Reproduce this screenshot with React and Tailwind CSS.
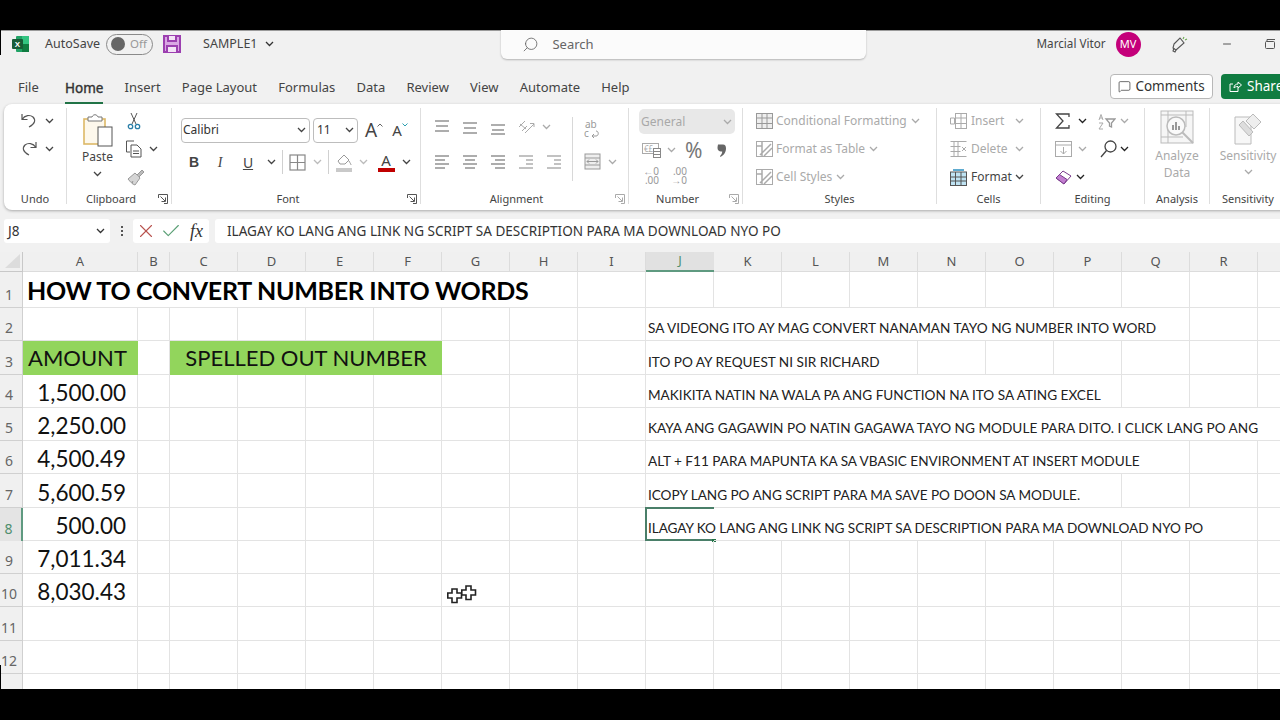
import { Search, MessageSquare, X, Check, Minus } from 'lucide-react';

/* ─── small helpers ─── */
const Chev = ({ c = '#444', className = '' }) => (
  <svg width="9" height="6" viewBox="0 0 9 6" fill="none" stroke={c} strokeWidth="1.300" className={`shrink-0 ${className}`}>
    <path d="M1 1l3.500 3.500L8 1" />
  </svg>
);
const Slot = ({ w, children, className = '' }) => (
  <div className={`flex items-center justify-center shrink-0 ${className}`} style={{ width: w }}>{children}</div>
);
const Launcher = ({ c = '#555' }) => (
  <svg width="10" height="10" viewBox="0 0 10 10" fill="none" stroke={c} className="absolute right-[3px] top-[4px]">
    <path d="M0.500 4V0.500h9v9H6M2.500 2.500l4.500 4.500M7.500 3.500v4h-4" />
  </svg>
);
const Lines = ({ rows, c = '#777' }) => (
  <svg width="18" height="16" viewBox="0 0 18 16" stroke={c} strokeWidth="1.200" className="shrink-0">
    {rows.map(([a, b, y]) => <path key={y} d={`M${a} ${y}H${b}`} />)}
  </svg>
);

/* ─── ribbon icons ─── */
const ExcelLogo = () => (
  <svg width="18" height="18" viewBox="0 0 18 18">
    <rect x="4" y="1" width="13" height="16" rx="1" fill="#21a366" />
    <rect x="10" y="1" width="7" height="8" fill="#33c481" />
    <rect x="10" y="9" width="7" height="8" fill="#107c41" />
    <rect x="0" y="4" width="11" height="10" rx="1" fill="#185c37" />
    <text x="5.500" y="12" textAnchor="middle" fontSize="8" fontWeight="700" fill="#fff" fontFamily="Liberation Sans">X</text>
  </svg>
);
const SaveIcon = () => (
  <svg width="18" height="18" viewBox="0 0 18 18" fill="none" stroke="#9c3fb0" strokeWidth="2">
    <rect x="1" y="1" width="16" height="16" fill="#d9a6e3" />
    <path d="M5 1v5h8V1M4 17v-6h10v6" fill="#f3e3f6" />
  </svg>
);
const Undo = ({ flip }) => (
  <svg width="18" height="18" viewBox="0 0 18 18" fill="none" stroke="#555" strokeWidth="1.200" className={flip ? '-scale-x-100' : ''}>
    <path d="M2 2v5.500h5.500M2 7.500C5 3 10 2.500 13 5c3 3 2 7-4 10" />
  </svg>
);
const PasteIcon = () => (
  <svg width="30" height="33" viewBox="0 0 30 33" fill="none">
    <rect x="1" y="5" width="21" height="25" fill="#fdf8ec" stroke="#dcb867" strokeWidth="1.600" />
    <path d="M5 7V3h4c1-3 5-3 6 0h4v4z" fill="#fff" stroke="#777" />
    <rect x="15" y="13" width="14" height="19" fill="#fff" stroke="#555" />
  </svg>
);
const ScissorsIcon = () => (
  <svg width="14" height="18" viewBox="0 0 14 18" fill="none" stroke="#555">
    <path d="M4 1l5 11M10 1L5 12" />
    <circle cx="3.500" cy="14.500" r="2.200" stroke="#2a7fa8" strokeWidth="1.300" />
    <circle cx="10.500" cy="14.500" r="2.200" stroke="#2a7fa8" strokeWidth="1.300" />
  </svg>
);
const CopyIcon = () => (
  <svg width="18" height="18" viewBox="0 0 18 18" fill="none" stroke="#555">
    <path d="M9 1H1.500v11H5" />
    <path d="M6 5h6l4 4v8H6z" fill="#fff" />
    <path d="M8 11h6M8 13.500h6" />
  </svg>
);
const BrushIcon = () => (
  <svg width="18" height="17" viewBox="0 0 18 17" fill="none" stroke="#999">
    <path d="M1 10l7-6 5 5-5 7-3-1.500 1-2-2 1z" fill="#d5d5d5" />
    <path d="M10 6l5-5 2 2-5 5" fill="#bbb" />
  </svg>
);
const BordersIcon = () => (
  <svg width="17" height="17" viewBox="0 0 17 17" fill="none" stroke="#888" strokeWidth="1.200" className="shrink-0">
    <rect x="1" y="1" width="15" height="15" />
    <path d="M8.500 1v15M1 8.500h15" />
  </svg>
);
const FillIcon = () => (
  <svg width="18" height="19" viewBox="0 0 18 19" fill="none" stroke="#999" className="shrink-0">
    <path d="M3 8l6-6 5 5-4 4H5z" />
    <path d="M14 8c1 2 2 3 2 4" />
    <rect x="1" y="15" width="16" height="4" fill="#c9c9c9" stroke="none" />
  </svg>
);
const WrapIcon = () => (
  <svg width="16" height="20" viewBox="0 0 16 20" fill="none" stroke="#999" strokeWidth="1">
    <text x="1" y="8" fontSize="10" fill="#999" stroke="none" fontFamily="Noto Sans">ab</text>
    <text x="0" y="17" fontSize="10" fill="#999" stroke="none" fontFamily="Noto Sans">c</text>
    <path d="M8 16h4c3 0 3-5 0-5M10 14l-2 2 2 2" />
  </svg>
);
const MergeIcon = () => (
  <svg width="17" height="17" viewBox="0 0 17 17" fill="none" stroke="#999" className="shrink-0">
    <rect x="1" y="1" width="15" height="15" fill="#eee" />
    <path d="M1 5h15M1 12h15M3 8.500h11M5 6.500l-2 2 2 2M12 6.500l2 2-2 2" />
  </svg>
);
const OrientIcon = () => (
  <svg width="18" height="16" viewBox="0 0 18 16" fill="none" stroke="#aaa" className="shrink-0">
    <path d="M2 8l6-6M5 12l5-5M3 5l6 5M8 14l9-9M13 4.500h4V8" />
  </svg>
);
const GridIcon = ({ c = '#aaa', fill = 'none' }) => (
  <svg width="17" height="16" viewBox="0 0 17 16" fill={fill} stroke={c} className="shrink-0">
    <rect x="0.500" y="0.500" width="16" height="15" />
    <path d="M0.500 5h16M0.500 10.500h16M6 0.500v15M11 0.500v15" fill="none" />
  </svg>
);
const HatchIcon = () => (
  <svg width="17" height="16" viewBox="0 0 17 16" fill="none" stroke="#aaa" className="shrink-0">
    <rect x="0.500" y="0.500" width="16" height="15" />
    <path d="M0.500 5h6M6 0.500v15M15 3L4 14M16 7l-8 8" strokeWidth="1.500" />
  </svg>
);
const InsertCellsIcon = () => (
  <svg width="17" height="16" viewBox="0 0 17 16" fill="none" stroke="#aaa" className="shrink-0">
    <rect x="5.500" y="0.500" width="11" height="15" />
    <path d="M5.500 5h11M5.500 10.500h11M11 0.500v15M0.500 5h4v6h-4z" />
  </svg>
);
const DeleteCellsIcon = () => (
  <svg width="17" height="16" viewBox="0 0 17 16" fill="none" stroke="#aaa" className="shrink-0">
    <path d="M0.500 0.500h16M0.500 15.500h16M0.500 5.500h10M0.500 10.500h10M4 0.500v15M8 0.500v15M12 6l4 4M16 6l-4 4" />
  </svg>
);
const CurrencyIcon = () => (
  <svg width="20" height="16" viewBox="0 0 20 16" fill="none" stroke="#aaa" className="shrink-0">
    <rect x="0.500" y="1.500" width="16" height="10" />
    <text x="2" y="9.500" fontSize="8" fill="#aaa" stroke="none" fontFamily="Noto Sans">€£</text>
    <rect x="11.500" y="6.500" width="7" height="9" fill="#fff" stroke="#888" />
    <path d="M11.500 9.500h7M11.500 12.500h7" stroke="#888" />
  </svg>
);
const CommaIcon = () => (
  <svg width="9" height="14" viewBox="0 0 9 14" className="shrink-0">
    <path d="M1 1.500h5c2 0 3 1.500 3 4 0 4-2.500 7-5.500 8.500L3 13c1.500-1.500 2.200-3 2.200-4.500H4C2 8.500 0.500 7 0.500 5 0.500 3 1 2 1 1.500z" fill="#666" />
  </svg>
);
const FormatIcon = () => (
  <svg width="17" height="17" viewBox="0 0 17 17" fill="none" stroke="#555" className="shrink-0">
    <rect x="0.500" y="3" width="16" height="13.500" fill="#bfe3f3" />
    <path d="M0.500 8h16M0.500 12h16M5.500 3v13.500M11 3v13.500" />
    <path d="M3 1h11" stroke="#2a8fc0" strokeWidth="1.500" />
  </svg>
);
const SigmaIcon = () => (
  <svg width="15" height="16" viewBox="0 0 15 16" fill="none" stroke="#444" strokeWidth="1.300" className="shrink-0">
    <path d="M14 4V1H1.500L8 8l-6.500 7H14v-3" />
  </svg>
);
const FindIcon = () => (
  <svg width="17" height="18" viewBox="0 0 17 18" fill="none" stroke="#444" strokeWidth="1.300" className="shrink-0">
    <circle cx="10.500" cy="6.500" r="5.500" />
    <path d="M6.500 10.500L1 17" />
  </svg>
);
const Eraser = () => (
  <svg width="17" height="15" viewBox="0 0 17 15" fill="none" stroke="#7a3a8c" className="shrink-0">
    <path d="M1 8l7-7 8 5-7 8z" fill="#fff" />
    <path d="M1 8l3.500-3.500 7.500 5L9 14z" fill="#c27ed0" />
  </svg>
);
const SortIcon = () => (
  <svg width="18" height="17" viewBox="0 0 18 17" fill="none" stroke="#aaa" className="shrink-0">
    <path d="M1 7l2-5.500L5 7M1.800 5h2.500M1 10h4l-4 6h4" />
    <path d="M8 6h9l-3.500 4v4l-2-1v-3z" strokeWidth="1.300" stroke="#999" />
  </svg>
);
const FillDown = () => (
  <svg width="17" height="16" viewBox="0 0 17 16" fill="none" stroke="#aaa" className="shrink-0">
    <rect x="0.500" y="0.500" width="16" height="15" />
    <path d="M0.500 4h16M8.500 6v7M5.500 10l3 3 3-3" />
  </svg>
);
const AnalyzeIcon = () => (
  <svg width="35" height="35" viewBox="0 0 35 35" fill="none" stroke="#bbb">
    <rect x="1" y="1" width="32" height="32" fill="#f6f6f6" />
    <path d="M1 5h32M1 27h22M8 1v32M26 1v16" />
    <circle cx="16" cy="16" r="9" fill="#fafafa" strokeWidth="1.500" />
    <path d="M22.500 22.500L33 33" strokeWidth="2" />
    <path d="M13 20v-5M16 20v-8M19 20v-4" strokeWidth="2" stroke="#999" />
  </svg>
);
const SensitivityIcon = () => (
  <svg width="30" height="33" viewBox="0 0 30 33" fill="none" stroke="#bbb">
    <path d="M2 5h16v27H2z" fill="#f7f7f7" />
    <path d="M6 13l10 11 4-4L10 9z" fill="#ddd" />
    <path d="M13 9l7-7 8 8-7 7z" fill="#eee" />
  </svg>
);
const FeedbackIcon = () => (
  <svg width="18" height="18" viewBox="0 0 18 18" fill="none" stroke="#555" strokeWidth="1.100" className="shrink-0">
    <path d="M4 9L10 3l4 5-8 7-3-2z" />
    <path d="M6 15l-1 2-2-1 1-3" />
    <path d="M14 2l-1 2M17 4l-2 1" stroke="#6aa84f" />
  </svg>
);
const DragCursor = () => (
  <svg width="30" height="19" viewBox="0 0 30 19" fill="#fff" stroke="#222" strokeWidth="1.600">
    <path d="M5 4h5v4h4.500v5H10v4.500H5V13H0.800V8H5z" />
    <path d="M19 1h5v4h4.500v5H24v4.500h-5V10h-4.200V5H19z" />
  </svg>
);

/* ─── ribbon group ─── */
const Group = ({ w, label, launcher, sep = true, children }) => (
  <div className={`relative h-[96px] shrink-0 ${sep ? 'border-r border-[#dedede]' : ''}`} style={{ width: w }}>
    <div className="h-[83px] -mt-[1px] flow-root">{children}</div>
    <div className={`relative h-[18px] flex items-center justify-center text-[11px] text-[#444] ${launcher ? 'pr-[16px]' : ''}`}>
      {label}
      {launcher && <Launcher c={launcher} />}
    </div>
  </div>
);
const Row = ({ children, className = '' }) => (
  <div className={`flex items-center h-[28px] ${className}`}>{children}</div>
);

const UndoGroup = () => (
  <Group w={63} label="Undo">
    <div className="pl-[16px]">
      <Row><Undo /><Chev className="ml-[7px]" /></Row>
      <Row><Undo flip /><Chev className="ml-[7px]" /></Row>
    </div>
  </Group>
);

const ClipboardGroup = () => (
  <Group w={105} label="Clipboard" launcher="#555">
    <div className="flex">
      <div className="w-[60px] flex flex-col items-center pt-[7px] pl-[1px]">
        <PasteIcon />
        <span className="text-[12px] text-[#444] mt-[1px] leading-[18px]">Paste</span>
        <Chev className="mt-[5px]" />
      </div>
      <div>
        <Row><Slot w={14}><ScissorsIcon /></Slot></Row>
        <Row className="-ml-[2px]"><CopyIcon /><Chev className="ml-[6px]" /></Row>
        <Row><BrushIcon /></Row>
      </div>
    </div>
  </Group>
);

const FontGroup = () => (
  <Group w={249} label="Font" launcher="#555">
    <div className="flex items-center mt-[11px] pl-[9px] h-[24px]">
      <div className="w-[129px] h-[25px] bg-white border border-[#bdbdbd] rounded-[4px] flex items-center justify-between pl-[1px] pr-[3px] text-[12px] text-[#333]">
        Calibri <Chev />
      </div>
      <div className="ml-[3px] w-[45px] h-[25px] bg-white border border-[#bdbdbd] rounded-[4px] flex items-center justify-between pl-[3px] pr-[3px] text-[12px] text-[#333]">
        11 <Chev />
      </div>
      <span className="ml-[7px] text-[19px] leading-none text-[#444]">A</span>
      <svg width="6" height="4" viewBox="0 0 6 4" fill="none" stroke="#666" className="-mt-[10px]"><path d="M0.500 3.500L3 1l2.500 2.500" /></svg>
      <span className="ml-[9px] text-[15px] leading-none text-[#444]">A</span>
      <svg width="6" height="4" viewBox="0 0 6 4" fill="none" stroke="#2a9fb0" className="-mt-[10px]"><path d="M0.500 0.500L3 3l2.500-2.500" /></svg>
    </div>
    <div className="flex items-center mt-[8px] h-[24px] pl-[16px] text-[#444]">
      <Slot w={12}><span className="text-[14px] font-bold font-['Liberation_Sans']">B</span></Slot>
      <Slot w={14} className="ml-[13px]"><span className="text-[14px] italic font-['Liberation_Serif']">I</span></Slot>
      <Slot w={14} className="ml-[14px]"><span className="text-[14px] underline">U</span></Slot>
      <Chev className="ml-[12px]" />
      <div className="ml-[6px] h-[24px] border-l border-[#d0d0d0]" />
      <div className="ml-[6px]"><BordersIcon /></div>
      <Chev c="#bbb" className="ml-[7px]" />
      <div className="ml-[6px] h-[24px] border-l border-[#d0d0d0]" />
      <div className="ml-[6px]"><FillIcon /></div>
      <Chev c="#bbb" className="ml-[6px]" />
      <div className="ml-[9px] flex flex-col items-center w-[18px]">
        <span className="text-[15px] leading-[14px] text-[#444]">A</span>
        <div className="w-[17px] h-[4px] mt-[1px] bg-[#c00000]" />
      </div>
      <Chev className="ml-[7px]" />
    </div>
  </Group>
);

const AlignGroup = () => (
  <Group w={208} label="Alignment" launcher="#aaa">
    <div className="flex items-start pl-[12px]">
      <div>
        <div className="flex items-center gap-[10px] h-[24px] mt-[8px]">
          <Lines rows={[[2, 16, 2], [3, 15, 7], [2, 16, 12]]} />
          <Lines rows={[[2, 16, 4], [3, 15, 9], [2, 16, 14]]} />
          <Lines rows={[[2, 16, 6], [3, 15, 11], [2, 16, 15]]} />
          <OrientIcon />
          <Chev c="#aaa" className="-ml-[3px]" />
        </div>
        <div className="flex items-center gap-[10px] h-[24px] mt-[11px]">
          <Lines rows={[[2, 16, 2], [2, 12, 6], [2, 16, 10], [2, 12, 14]]} />
          <Lines rows={[[2, 16, 2], [4, 14, 6], [2, 16, 10], [4, 14, 14]]} />
          <Lines rows={[[2, 16, 2], [6, 16, 6], [2, 16, 10], [6, 16, 14]]} />
          <Lines rows={[[2, 16, 2], [9, 16, 6], [9, 16, 10], [2, 16, 14]]} c="#999" />
          <Lines rows={[[2, 16, 2], [9, 16, 6], [9, 16, 10], [2, 16, 14]]} c="#999" />
        </div>
      </div>
      <div className="ml-[9px] mt-[10px] h-[64px] border-l border-[#d8d8d8]" />
      <div className="ml-[11px] mt-[13px]">
        <WrapIcon />
        <div className="flex items-center mt-[13px]"><MergeIcon /><Chev c="#aaa" className="ml-[7px]" /></div>
      </div>
    </div>
  </Group>
);

const NumberGroup = () => (
  <Group w={114} label="Number" launcher="#aaa">
    <div className="pl-[10px]">
      <div className="w-[96px] h-[25px] mt-[2px] bg-[#e8e8e8] rounded-[5px] flex items-center justify-between pl-[2px] pr-[3px] text-[12px] text-[#a8a8a8]">
        General <Chev c="#aaa" />
      </div>
      <div className="flex items-center h-[26px] mt-[3px] pl-[3px]">
        <CurrencyIcon />
        <Chev c="#aaa" className="ml-[5px]" />
        <span className="ml-[9px] text-[21px] leading-none text-[#777]">%</span>
        <div className="ml-[15px]"><CommaIcon /></div>
      </div>
      <div className="flex items-center h-[26px] text-[10px] leading-[9px] text-[#999]">
        <span className="w-[20px] text-right">←0<br />.00</span>
        <span className="ml-[8px] w-[20px] text-right">.00<br />→0</span>
      </div>
    </div>
  </Group>
);

const StyleLine = ({ icon, label }) => (
  <Row className="pl-[5px]">
    {icon}
    <span className="ml-[3px] text-[12px] text-[#aaa] whitespace-nowrap">{label}</span>
    <Chev c="#aaa" className="ml-[4px]" />
  </Row>
);

const StylesGroup = () => (
  <Group w={194} label="Styles">
    <div className="pl-[8px]">
      <StyleLine icon={<GridIcon c="#999" fill="#eee" />} label="Conditional Formatting" />
      <StyleLine icon={<HatchIcon />} label="Format as Table" />
      <StyleLine icon={<HatchIcon />} label="Cell Styles" />
    </div>
  </Group>
);

const CellsGroup = () => (
  <Group w={104} label="Cells">
    <div className="pl-[8px]">
      <Row className="pl-[5px]"><InsertCellsIcon /><span className="ml-[4px] text-[12px] text-[#aaa] w-[44px]">Insert</span><Chev c="#aaa" /></Row>
      <Row className="pl-[5px]"><DeleteCellsIcon /><span className="ml-[4px] text-[12px] text-[#aaa] w-[44px]">Delete</span><Chev c="#aaa" /></Row>
      <Row className="pl-[5px]"><FormatIcon /><span className="ml-[4px] text-[12px] text-[#444]">Format</span><Chev className="ml-[3px]" /></Row>
    </div>
  </Group>
);

const EditingGroup = () => (
  <Group w={104} label="Editing">
    <div className="pl-[14px]">
      <Row>
        <SigmaIcon />
        <Chev c="#222" className="ml-[8px]" />
        <div className="ml-[11px]"><SortIcon /></div>
        <Chev c="#aaa" className="ml-[4px]" />
      </Row>
      <Row>
        <FillDown />
        <Chev c="#aaa" className="ml-[6px]" />
        <div className="ml-[13px]"><FindIcon /></div>
        <Chev c="#222" className="ml-[3px]" />
      </Row>
      <Row>
        <Eraser />
        <Chev c="#222" className="ml-[4px]" />
      </Row>
    </div>
  </Group>
);

const AnalysisGroup = () => (
  <Group w={65} label="Analysis">
    <div className="flex flex-col items-center pt-[3px]">
      <AnalyzeIcon />
      <span className="text-[12px] leading-[17px] text-[#aaa] mt-[2px] text-center">Analyze<br />Data</span>
    </div>
  </Group>
);

const SensitivityGroup = () => (
  <Group w={76} label="Sensitivity" sep={false}>
    <div className="flex flex-col items-center pt-[5px]">
      <SensitivityIcon />
      <span className="text-[12px] leading-[17px] text-[#aaa] mt-[2px]">Sensitivity</span>
      <Chev c="#aaa" className="mt-[5px]" />
    </div>
  </Group>
);

/* ─── sheet data ─── */
const COLS = ['A', 'B', 'C', 'D', 'E', 'F', 'G', 'H', 'I', 'J', 'K', 'L', 'M', 'N', 'O', 'P', 'Q', 'R', 'S'];
const AMOUNTS = { 4: '1,500.00', 5: '2,250.00', 6: '4,500.49', 7: '5,600.59', 8: '500.00', 9: '7,011.34', 10: '8,030.43' };
// text, last column whose gridline the text hides, fine width correction
const NOTES = {
  2: ['SA VIDEONG ITO AY MAG CONVERT NANAMAN TAYO NG NUMBER INTO WORD', 'P', ''],
  3: ['ITO PO AY REQUEST NI SIR RICHARD', 'L', ''],
  4: ['MAKIKITA NATIN NA WALA PA ANG FUNCTION NA ITO SA ATING EXCEL', 'O', ''],
  5: ['KAYA ANG GAGAWIN PO NATIN GAGAWA TAYO NG MODULE PARA DITO. I CLICK LANG PO ANG', 'R', 'tracking-[0.025px]'],
  6: ['ALT + F11 PARA MAPUNTA KA SA VBASIC ENVIRONMENT AT INSERT MODULE', 'P', ''],
  7: ['ICOPY LANG PO ANG SCRIPT PARA MA SAVE PO DOON SA MODULE.', 'O', 'tracking-[-0.04px]'],
  8: ['ILAGAY KO LANG ANG LINK NG SCRIPT SA DESCRIPTION PARA MA DOWNLOAD NYO PO', 'Q', 'tracking-[-0.08px]'],
};

// true when text spilling across this row hides the cell's right gridline
const isSpilled = (row, col) => {
  const i = COLS.indexOf(col);
  if (row === 1) return i <= COLS.indexOf('G');
  if (NOTES[row]) return i >= COLS.indexOf('J') && i <= COLS.indexOf(NOTES[row][1]);
  return false;
};

const Cell = ({ row, col }) => {
  const spilled = isSpilled(row, col);
  const line = spilled ? 'border-b border-[#e3e3e3]' : 'border-b border-r border-[#e3e3e3]';
  let content = null;

  if (row === 1 && col === 'A') {
    content = <span className="absolute left-[4px] bottom-0 text-[25px] tracking-[-0.3px] leading-[34px] font-bold text-black whitespace-nowrap font-['Lato']">HOW TO CONVERT NUMBER INTO WORDS</span>;
  }
  if (row >= 4 && row <= 10 && col === 'A') {
    content = <span className="absolute right-[11px] -bottom-[1px] text-[22.500px] leading-[30px] text-[#111] font-['Lato']">{AMOUNTS[row]}</span>;
  }
  if (NOTES[row] && col === 'J') {
    content = <span className={`absolute left-[2px] bottom-[3px] text-[13.600px] leading-[18px] text-[#222] whitespace-nowrap font-['Lato'] ${NOTES[row][2]}`}>{NOTES[row][0]}</span>;
  }
  return (
    <div className={`relative ${line}`}>
      {content}
      {row === 8 && col === 'J' && (
        <div className="absolute -left-[1px] -top-[1px] -bottom-[1px] right-0 border-l-2 border-t-2 border-b-2 border-[#4a7f69]">
          <div className="absolute -right-[2px] -bottom-[3px] w-[4px] h-[3px] bg-[#217346]" />
        </div>
      )}
    </div>
  );
};

const GreenRow = () => (
  <>
    <div className="bg-[#92d55c] flex items-end pl-[5px] pb-[1px] text-[22px] leading-[32px] text-[#111] font-['Lato']">AMOUNT</div>
    <div className="border-b border-r border-[#e3e3e3]" />
    <div className="col-span-4 bg-[#92d55c] flex items-end justify-center pb-[1px] text-[22px] leading-[32px] text-[#111] font-['Lato']">SPELLED OUT NUMBER</div>
    {COLS.slice(6).map(c => <Cell key={c} row={3} col={c} />)}
  </>
);

const Sheet = () => (
  <div className="flex-1 min-h-0 overflow-hidden mt-[9px] bg-white">
    <div className="grid w-[1362px] grid-cols-[23px_115px_32px_repeat(16,68px)_68px] grid-rows-[20px_36px_repeat(11,33.25px)_40px]">
      {/* corner + column letters */}
      <div className="bg-[#f0f0f0] border-b border-r border-[#c8c8c8] flex items-end justify-end pb-[3px] pr-[2px]">
        <svg width="15" height="14" viewBox="0 0 15 14"><path d="M15 0v14H0z" fill="#dcdcdc" /></svg>
      </div>
      {COLS.map(c => (
        c === 'J' ? (
          <div key={c} className="bg-[#e1e1e1] border-b-2 border-[#5f9a80] flex items-center justify-center text-[13px] text-[#4f8f6e] font-['Noto_Sans']">{c}</div>
        ) : (
          <div key={c} className="bg-[#f0f0f0] border-b border-r border-[#dcdcdc] flex items-center justify-center text-[13px] text-[#555] font-['Noto_Sans']">{c}</div>
        )
      ))}

      {Array.from({ length: 13 }, (_, i) => i + 1).map(row => (
        <div key={row} className="contents">
          {row === 8 ? (
            <div className="bg-[#e4e4e4] border-r-2 border-[#5f9a80] flex items-end justify-center pr-[4px] pb-[3px] text-[14px] leading-[18px] text-[#4f8f6e] font-['Noto_Sans']">{row}</div>
          ) : (
            <div className="bg-[#f0f0f0] border-b border-r border-[#d0d0d0] flex items-end justify-center pr-[4px] pb-[3px] text-[14px] leading-[18px] text-[#666] font-['Noto_Sans']">{row <= 12 ? row : ''}</div>
          )}
          {row === 3 ? <GreenRow /> : COLS.map(c => <Cell key={c} row={row} col={c} />)}
        </div>
      ))}
    </div>
  </div>
);

const TABS = ['Home', 'Insert', 'Page Layout', 'Formulas', 'Data', 'Review', 'View', 'Automate', 'Help'];

export default function App() {
  return (
    <div className="relative w-[1280px] h-[720px] bg-black flex flex-col overflow-hidden pt-[30px] pb-[31px] font-['Noto_Sans']">
      <div className="flex-1 min-h-0 flex flex-col bg-[#f1f1f1] border-t border-[#9a9a9a]">

        {/* Title bar */}
        <div className="flex items-center h-[26px] shrink-0 text-[12.500px] text-[#444]">
          <div className="ml-[12px]"><ExcelLogo /></div>
          <span className="ml-[15px]">AutoSave</span>
          <div className="ml-[6px] w-[47px] h-[21px] rounded-full border border-[#8a8a8a] flex items-center pl-[4px]">
            <div className="w-[14px] h-[14px] rounded-full bg-[#666]" />
            <span className="ml-[5px] text-[11.500px] text-[#999]">Off</span>
          </div>
          <div className="ml-[10px]"><SaveIcon /></div>
          <span className="ml-[22px] whitespace-nowrap">SAMPLE1</span>
          <Chev c="#333" className="ml-[8px]" />
          <div className="ml-[227px] w-[365px] h-[29px] -mt-[1px] self-start shrink-0 bg-[#fbfbfb] rounded-b-[6px] shadow-[0_1px_2px_rgba(0,0,0,0.25)] flex items-center pl-[21px] text-[13px] text-[#666]">
            <Search size={17} strokeWidth={1.200} className="-scale-x-100" />
            <span className="ml-[13px]">Search</span>
          </div>
          <span className="ml-[170px] whitespace-nowrap text-[11.700px]">Marcial Vitor</span>
          <div className="ml-[10px] shrink-0 w-[25px] h-[25px] rounded-full bg-[#c4007a] text-white text-[11px] flex items-center justify-center">MV</div>
          <div className="ml-[29px]"><FeedbackIcon /></div>
          <Minus size={12} color="#555" className="ml-[33px] shrink-0" />
          <svg width="10" height="10" viewBox="0 0 10 10" fill="none" stroke="#555" className="ml-[32px] shrink-0"><rect x="0.500" y="2.500" width="9" height="7" rx="1" /><path d="M2 2.500V0.500h8" /></svg>
        </div>

        {/* Tabs */}
        <div className="flex items-center h-[30px] mt-[16px] pl-[18px] shrink-0 text-[13px] text-[#444] gap-[21.200px]">
          <div className="mr-[5px]">File</div>
          {TABS.map(t => (
            t === 'Home' ? (
              <div key={t} className="relative text-[13.500px] text-[#333] [-webkit-text-stroke:0.4px_#333]">
                {t}
                <div className="absolute left-0 right-0 -bottom-[6px] h-[2px] bg-[#217346]" />
              </div>
            ) : <div key={t}>{t}</div>
          ))}
          <div className="ml-auto flex items-center -mt-[3px] shrink-0">
            <div className="w-[103px] h-[25px] bg-white border border-[#b8b8b8] rounded-[4px] flex items-center justify-center gap-[4px] text-[13.500px] text-[#333]">
              <MessageSquare size={13} strokeWidth={1.300} /> Comments
            </div>
            <div className="ml-[8px] -mr-[20px] w-[79px] h-[25px] bg-[#107c41] rounded-l-[4px] text-[13.500px] text-white flex items-center pl-[8px] gap-[5px]">
              <svg width="13" height="13" viewBox="0 0 13 13" fill="none" stroke="#fff"><path d="M9 8v3.500H1V4h3M5 8c0-3 2-4 4-4V2l3.500 3L9 8V6.500C7 6.500 6 7 5 8z" /></svg>
              Share
            </div>
          </div>
        </div>

        {/* Ribbon */}
        <div className="ml-[4px] -mr-[8px] h-[106px] mt-[1px] pt-[4px] shrink-0 flex items-start bg-white rounded-l-[8px] shadow-[0_1px_3px_rgba(0,0,0,0.3)]">
          <UndoGroup />
          <ClipboardGroup />
          <FontGroup />
          <AlignGroup />
          <NumberGroup />
          <StylesGroup />
          <CellsGroup />
          <EditingGroup />
          <AnalysisGroup />
          <SensitivityGroup />
        </div>

        {/* Formula bar */}
        <div className="flex items-center h-[24px] mt-[9px] shrink-0 text-[13.560px] text-[#333]">
          <div className="ml-[4px] w-[106px] h-[24px] bg-white rounded-[3px] flex items-center justify-between pl-[4px] pr-[5px]">
            J8 <Chev c="#333" />
          </div>
          <div className="w-[23px] flex flex-col items-center gap-[2px]">
            <span className="w-[2px] h-[2px] bg-[#555]" /><span className="w-[2px] h-[2px] bg-[#555]" /><span className="w-[2px] h-[2px] bg-[#555]" />
          </div>
          <div className="w-[76px] h-[24px] bg-white rounded-[3px] flex items-center pl-[2px]">
            <X size={22} color="#b8524e" strokeWidth={1.200} />
            <Check size={22} color="#5a9f75" strokeWidth={1.200} className="ml-[3px]" />
            <span className="ml-[8px] text-[18px] italic font-['Liberation_Serif'] text-[#333]">fx</span>
          </div>
          <div className="ml-[6px] flex-1 h-[24px] bg-white rounded-l-[3px] flex items-center pl-[12px] whitespace-nowrap">
            ILAGAY KO LANG ANG LINK NG SCRIPT SA DESCRIPTION PARA MA DOWNLOAD NYO PO
          </div>
        </div>

        <Sheet />
      </div>

      {/* drag cursor floating over the sheet */}
      <div className="absolute left-[447px] top-[585px]"><DragCursor /></div>
      {/* black slivers left by the video frame at the window's left edge */}
      <div className="absolute left-0 top-[30px] w-[1px] h-[25px] bg-black" />
      <div className="absolute left-0 top-[665px] w-[1px] h-[25px] bg-black" />
    </div>
  );
}
